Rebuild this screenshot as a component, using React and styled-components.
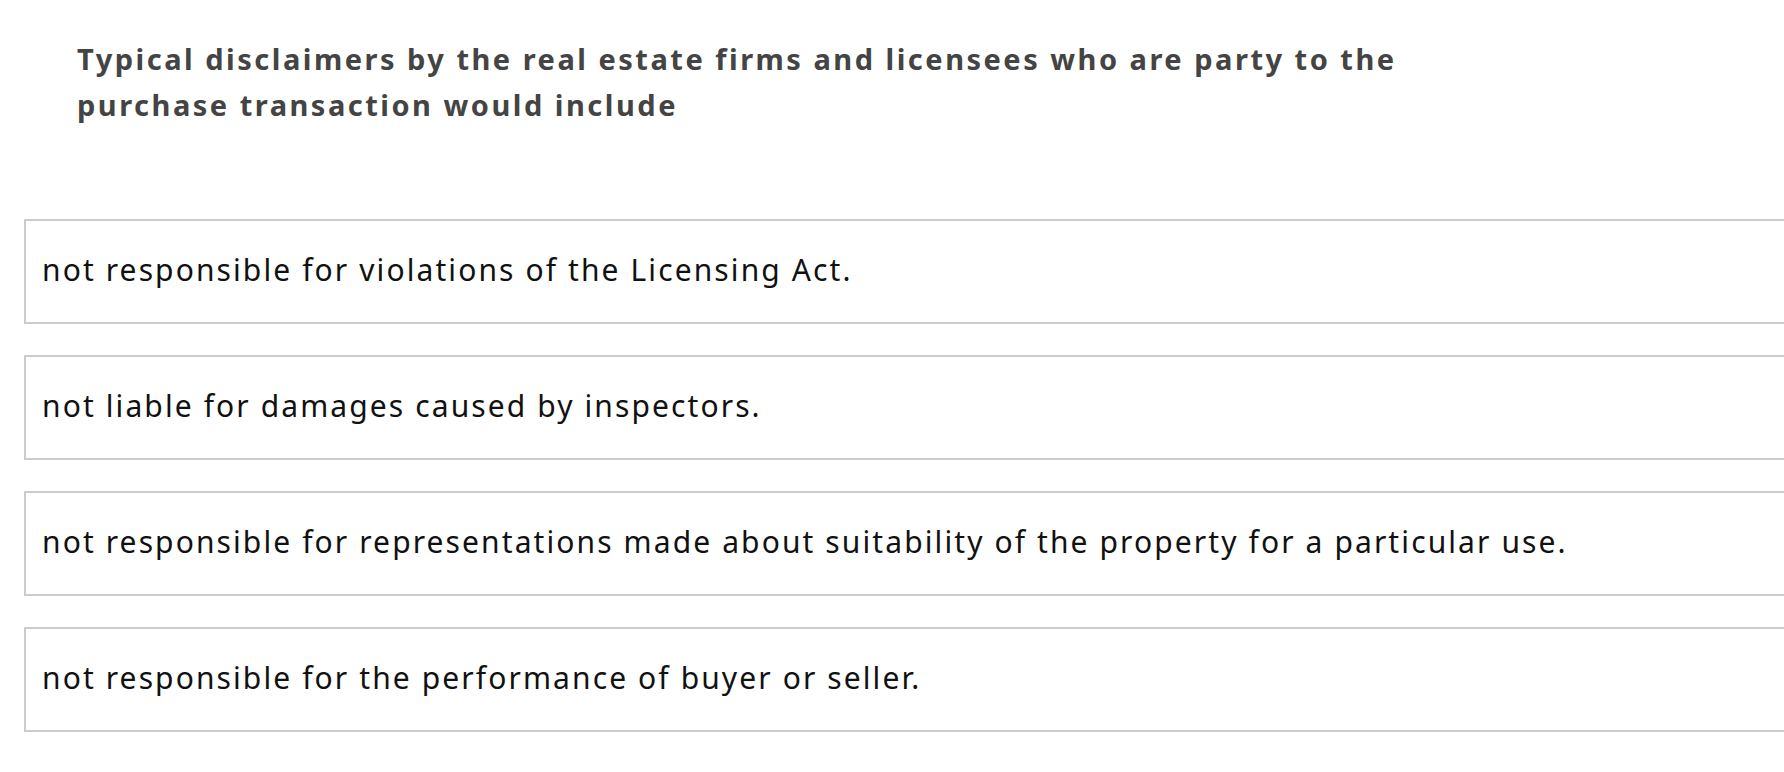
import React from 'react';
import styled, { createGlobalStyle } from 'styled-components';

const options = [
  'not responsible for violations of the Licensing Act.',
  'not liable for damages caused by inspectors.',
  'not responsible for representations made about suitability of the property for a particular use.',
  'not responsible for the performance of buyer or seller.'
];

function App() {
  return (
    <>
      <GlobalStyle />
      <Page>
        <Question>
          Typical disclaimers by the real estate firms and licensees who are party to the purchase transaction would
          include
        </Question>
        <OptionList>
          {options.map((text) => (
            <Option key={text}>{text}</Option>
          ))}
        </OptionList>
      </Page>
    </>
  );
}

const GlobalStyle = createGlobalStyle`
  html, body {
    margin: 0;
    padding: 0;
    background: #fff;
    overflow: hidden;
  }
  body {
    font-family: "Noto Sans", "Open Sans", sans-serif;
  }
`;

const Page = styled.div`
  width: 100%;
  min-height: 772px;
  overflow: hidden;
`;

// 질문
const Question = styled.h2`
  margin: 36px 0 0 77px;
  max-width: 1360px;
  font-size: 29px;
  font-weight: bold;
  line-height: 46px;
  color: #444;
  letter-spacing: 2.5px;
`;

const OptionList = styled.div`
  display: flex;
  flex-direction: column;
  gap: 31px;
  margin: 91px -40px 0 24px;
`;

// 보기
const Option = styled.div`
  display: flex;
  align-items: center;
  height: 105px;
  box-sizing: border-box;
  padding: 0 16px 4px;
  border: 2px solid #ccc;
  font-size: 30px;
  color: #111;
  letter-spacing: 2.1px;
`;

export default App;
